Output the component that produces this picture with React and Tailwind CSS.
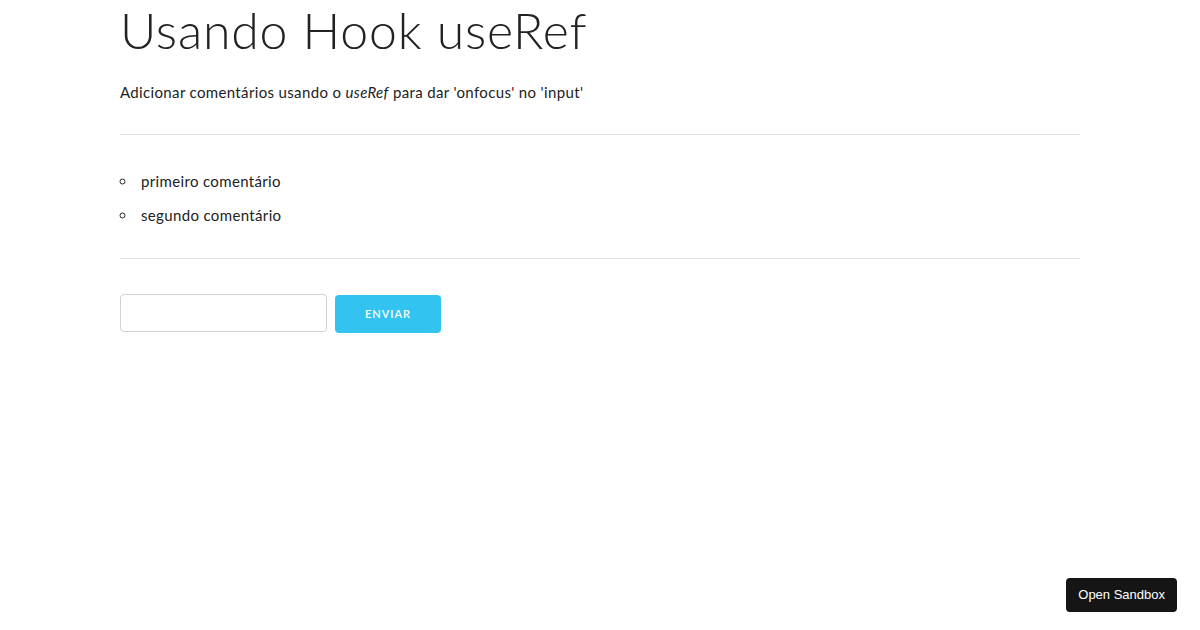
import React, { useRef, useState } from 'react';

export default function App() {
  const inputRef = useRef(null);
  const [comments, setComments] = useState(['primeiro comentário', 'segundo comentário']);
  const [text, setText] = useState('');

  const send = (e) => {
    e.preventDefault();
    if (text.trim()) setComments([...comments, text]);
    setText('');
    inputRef.current && inputRef.current.focus();
  };

  return (
    <div className="min-h-[630px] bg-white text-[#222] font-['Lato','Open_Sans',sans-serif]">
      <div className="w-[960px] mx-auto flex flex-col">
        <h1 className="text-[50px] leading-[60px] font-light tracking-[0.8px]">Usando Hook useRef</h1>
        <p className="mt-5 text-[15px] leading-6 tracking-[0.35px]">
          Adicionar comentários usando o <em>useRef</em> para dar 'onfocus' no 'input'
        </p>
        <hr className="mt-[30px] border-0 border-t border-[#E1E1E1]" />
        <ul className="mt-[34px] list-[circle] list-inside text-[15px] leading-6 tracking-[0.35px] flex flex-col gap-2.5">
          {comments.map((c) => (
            <li key={c}>{c}</li>
          ))}
        </ul>
        <hr className="mt-[31px] border-0 border-t border-[#E1E1E1]" />
        <form onSubmit={send} className="mt-[35px] flex items-start gap-2">
          <input
            ref={inputRef}
            value={text}
            onChange={(e) => setText(e.target.value)}
            className="w-[207px] h-[38px] px-2.5 border border-[#D1D1D1] rounded bg-white text-[15px] outline-none"
          />
          <button
            type="submit"
            className="mt-px h-[38px] px-[30px] rounded bg-[#33C3F0] text-white text-[11px] font-semibold tracking-[1px] uppercase"
          >
            Enviar
          </button>
        </form>
      </div>
      <button className="fixed right-[23px] bottom-[18px] h-[34px] px-3 rounded bg-[#151515] text-white text-[13px] font-['Liberation_Sans',Arial,sans-serif]">
        Open Sandbox
      </button>
    </div>
  );
}
